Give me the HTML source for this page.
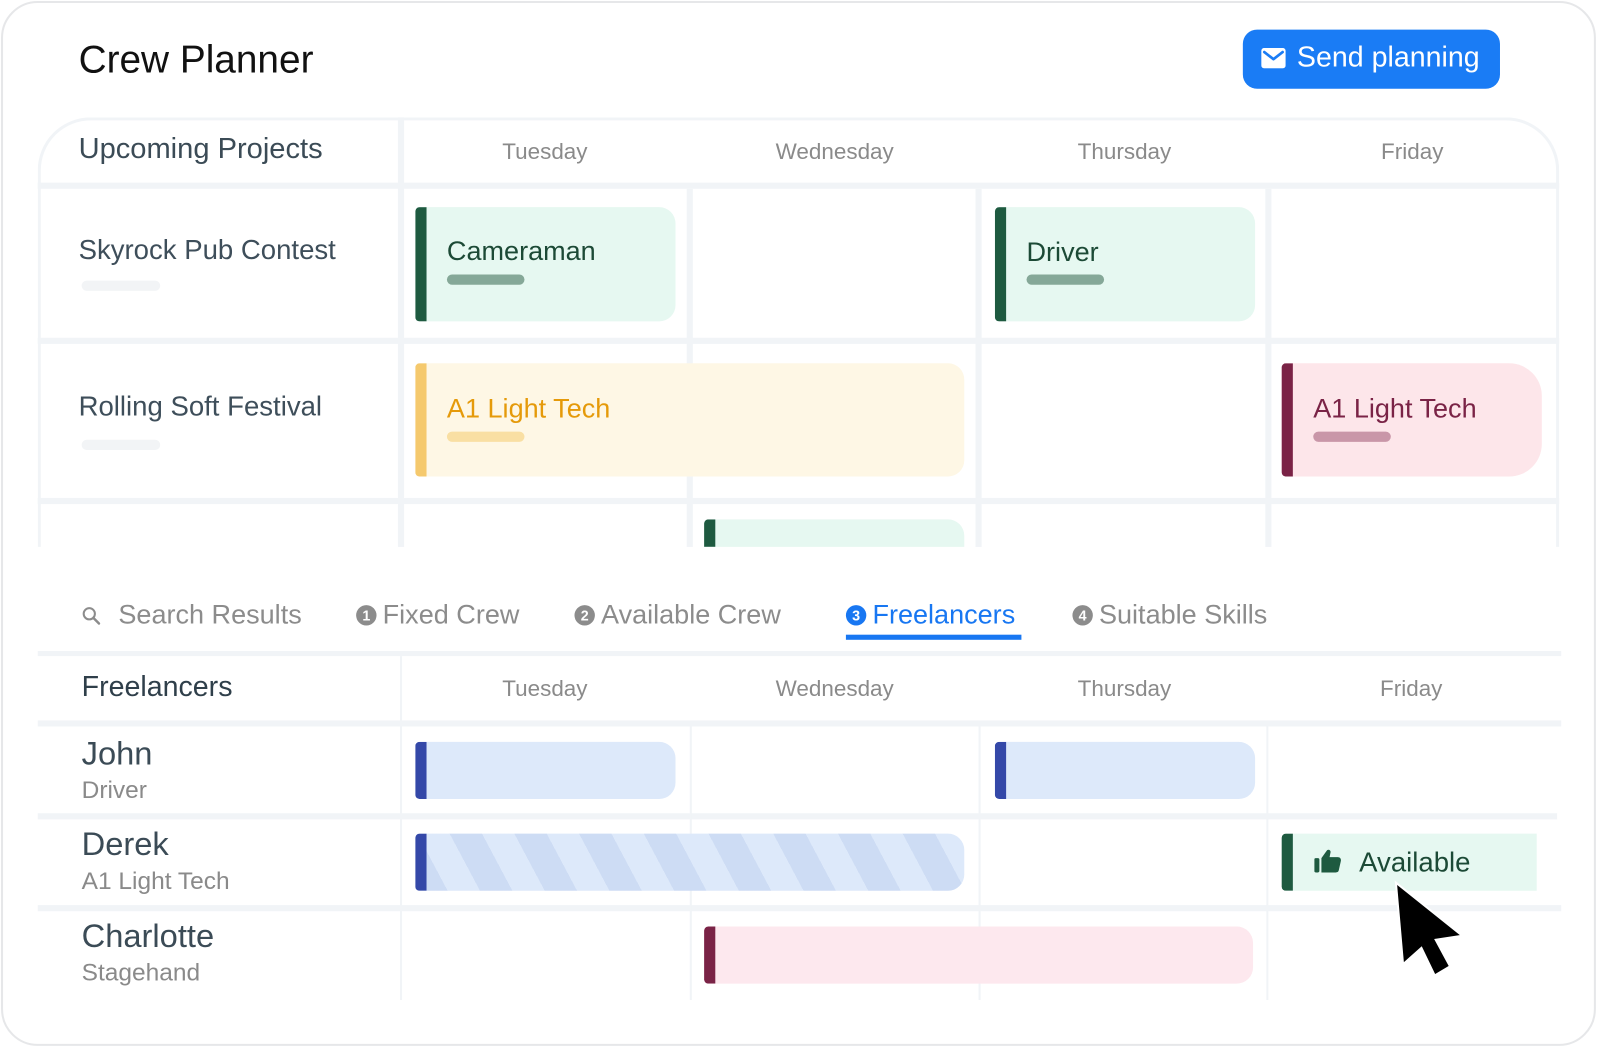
<!DOCTYPE html>
<html><head><meta charset="utf-8">
<style>
html,body{margin:0;padding:0;background:#fff;width:1600px;height:1050px;overflow:hidden}
#w{position:absolute;left:0;top:0;width:1568px;height:1029px;transform:scale(1.0204);transform-origin:0 0;font-family:"Liberation Sans",sans-serif}
.a{position:absolute}
.card{left:1px;top:1px;width:1563px;height:1024px;border:2px solid #e6e7e9;border-radius:36px;box-sizing:border-box;background:#fff}
.l{position:absolute;background:#f1f4f7}
.t{position:absolute;white-space:nowrap}
.day{color:#8a8a8a;font-size:22px;text-align:center;width:200px}
.blk{position:absolute;border-radius:4px 16px 16px 4px;overflow:hidden}
.bar{position:absolute;left:0;top:0;bottom:0;width:11px;border-radius:4px 0 0 4px}
.pill{position:absolute;height:10px;border-radius:5px}
.tab{position:absolute;top:587px;font-size:26.5px;color:#8c8c8c;white-space:nowrap}
.num{display:inline-block;width:20px;height:20px;border-radius:50%;background:#8c8c8c;color:#fff;font-size:14px;font-weight:bold;text-align:center;line-height:20px;vertical-align:3px;margin-right:6px}
.nm{font-size:32px;color:#3b4b56}
.rl{font-size:24px;color:#8a8a8a}
</style></head><body>
<div id="w">
<div class="a card"></div>
<div class="t" style="left:77px;top:38px;font-size:38px;color:#111;font-weight:500">Crew Planner</div>
<div class="a" style="left:1218px;top:29px;width:252px;height:58px;background:#1a7cf5;border-radius:14px"></div>
<svg class="a" style="left:1236px;top:47px" width="24" height="20" viewBox="0 0 24 20"><rect x="0" y="0" width="24" height="20" rx="3" fill="#fff"/><path d="M3 4 L12 11 L21 4" stroke="#1a7cf5" stroke-width="2.6" fill="none" stroke-linecap="round" stroke-linejoin="round"/></svg>
<div class="t" style="left:1271px;top:40px;font-size:28px;color:#fff">Send planning</div>

<div class="a" style="left:37px;top:115px;width:1491px;height:480px;border:3px solid #f1f4f7;border-radius:52px 52px 0 0;box-sizing:border-box;clip-path:inset(0 0 59px 0)"></div>
<div class="l" style="left:37px;top:179px;width:1491px;height:6px"></div>
<div class="l" style="left:37px;top:331px;width:1491px;height:6px"></div>
<div class="l" style="left:37px;top:488px;width:1491px;height:6px"></div>
<div class="l" style="left:390px;top:115px;width:6px;height:421px"></div>
<div class="l" style="left:673px;top:185px;width:6px;height:351px"></div>
<div class="l" style="left:956px;top:185px;width:6px;height:351px"></div>
<div class="l" style="left:1240px;top:185px;width:6px;height:351px"></div>
<div class="t" style="left:77px;top:130px;font-size:28.5px;color:#3b4b56">Upcoming Projects</div>
<div class="t day" style="left:434px;top:136px">Tuesday</div>
<div class="t day" style="left:718px;top:136px">Wednesday</div>
<div class="t day" style="left:1002px;top:136px">Thursday</div>
<div class="t day" style="left:1284px;top:136px">Friday</div>
<div class="t" style="left:77px;top:230px;font-size:27px;color:#3e4e5a">Skyrock Pub Contest</div>
<div class="pill" style="left:80px;top:275px;width:77px;background:#f2f4f6"></div>
<div class="t" style="left:77px;top:383px;font-size:27px;color:#3e4e5a">Rolling Soft Festival</div>
<div class="pill" style="left:80px;top:431px;width:77px;background:#f2f4f6"></div>

<div class="blk" style="left:407px;top:203px;width:255px;height:112px;background:#e6f8f1"><div class="bar" style="background:#1e5a40"></div></div>
<div class="t" style="left:438px;top:231px;font-size:26.5px;color:#1c4a36">Cameraman</div>
<div class="pill" style="left:438px;top:269px;width:76px;background:#85a898"></div>
<div class="blk" style="left:975px;top:203px;width:255px;height:112px;background:#e6f8f1"><div class="bar" style="background:#1e5a40"></div></div>
<div class="t" style="left:1006px;top:232px;font-size:26.5px;color:#1c4a36">Driver</div>
<div class="pill" style="left:1006px;top:269px;width:76px;background:#85a898"></div>
<div class="blk" style="left:407px;top:356px;width:538px;height:111px;background:#fef7e5"><div class="bar" style="background:#f5c96d"></div></div>
<div class="t" style="left:438px;top:385px;font-size:26.5px;color:#e59a0a">A1 Light Tech</div>
<div class="pill" style="left:438px;top:423px;width:76px;background:#f9dfa3"></div>
<div class="blk" style="left:1256px;top:356px;width:255px;height:111px;background:#fde6ea;border-radius:4px 32px 32px 4px"><div class="bar" style="background:#7a2346"></div></div>
<div class="t" style="left:1287px;top:385px;font-size:26.5px;color:#7a2346">A1 Light Tech</div>
<div class="pill" style="left:1287px;top:423px;width:76px;background:#c996a8"></div>
<div class="blk" style="left:690px;top:509px;width:255px;height:27px;background:#e6f8f1;border-radius:4px 16px 0 0"><div class="bar" style="background:#1e5a40;border-radius:4px 0 0 0"></div></div>

<svg class="a" style="left:80px;top:594px" width="20" height="20" viewBox="0 0 20 20"><circle cx="7.5" cy="7.5" r="5.5" stroke="#8c8c8c" stroke-width="2" fill="none"/><path d="M11.5 11.5 L17 17" stroke="#8c8c8c" stroke-width="2.4" stroke-linecap="round"/></svg>
<div class="tab" style="left:116px">Search Results</div>
<div class="tab" style="left:349px"><span class="num">1</span>Fixed Crew</div>
<div class="tab" style="left:563px"><span class="num">2</span>Available Crew</div>
<div class="tab" style="left:829px;color:#1877f2"><span class="num" style="background:#1877f2">3</span>Freelancers</div>
<div class="a" style="left:829px;top:622px;width:172px;height:5px;background:#1877f2"></div>
<div class="tab" style="left:1051px"><span class="num">4</span>Suitable Skills</div>

<div class="l" style="left:37px;top:638px;width:1493px;height:5px"></div>
<div class="l" style="left:37px;top:706px;width:1493px;height:6px"></div>
<div class="l" style="left:37px;top:797px;width:1489px;height:6px"></div>
<div class="l" style="left:37px;top:887px;width:1493px;height:6px"></div>
<div class="l" style="left:392px;top:643px;width:2px;height:337px"></div>
<div class="l" style="left:676px;top:712px;width:2px;height:268px"></div>
<div class="l" style="left:959px;top:712px;width:2px;height:268px"></div>
<div class="l" style="left:1241px;top:712px;width:2px;height:268px"></div>
<div class="t" style="left:80px;top:657px;font-size:28px;color:#2f3f4a">Freelancers</div>
<div class="t day" style="left:434px;top:662px">Tuesday</div>
<div class="t day" style="left:718px;top:662px">Wednesday</div>
<div class="t day" style="left:1002px;top:662px">Thursday</div>
<div class="t day" style="left:1283px;top:662px">Friday</div>

<div class="t nm" style="left:80px;top:720px">John</div>
<div class="t rl" style="left:80px;top:761px">Driver</div>
<div class="t nm" style="left:80px;top:809px">Derek</div>
<div class="t rl" style="left:80px;top:850px">A1 Light Tech</div>
<div class="t nm" style="left:80px;top:899px">Charlotte</div>
<div class="t rl" style="left:80px;top:940px">Stagehand</div>

<div class="blk" style="left:407px;top:727px;width:255px;height:56px;background:#dde9fa"><div class="bar" style="background:#3448a8"></div></div>
<div class="blk" style="left:975px;top:727px;width:255px;height:56px;background:#dde9fa"><div class="bar" style="background:#3448a8"></div></div>
<div class="blk" style="left:407px;top:817px;width:538px;height:56px;background:repeating-linear-gradient(62deg,#cddcf4 0 28px,#dde9fa 28px 56px)"><div class="bar" style="background:#3448a8"></div></div>
<div class="blk" style="left:1256px;top:817px;width:250px;height:56px;background:#e6f8f1;border-radius:4px 0 0 4px"><div class="bar" style="background:#1e5a40"></div></div>
<svg class="a" style="left:1288px;top:832px" width="27" height="24" viewBox="0 0 27 24"><rect x="0" y="9" width="5" height="14" rx="1.5" fill="#1e5a40"/><path d="M7 9 L12 2 C13 0 16 0.5 16 3 L15 8 L23 8 C25.5 8 26.5 10 26 12 L24 21 C23.6 22.5 22.5 23 21 23 L7 23 Z" fill="#1e5a40"/></svg>
<div class="t" style="left:1332px;top:830px;font-size:27px;color:#1c4a36">Available</div>
<div class="blk" style="left:690px;top:908px;width:538px;height:56px;background:#fde8ee"><div class="bar" style="background:#7a2346"></div></div>

<svg class="a" style="left:1362px;top:862px" width="75" height="100" viewBox="0 0 75 100"><path d="M6 3 L71 55 L45 59 L59 85 L44 94 L31 67 L13 83 Z" fill="#000" stroke="#fff" stroke-width="2"/></svg>
</div>
</body></html>
